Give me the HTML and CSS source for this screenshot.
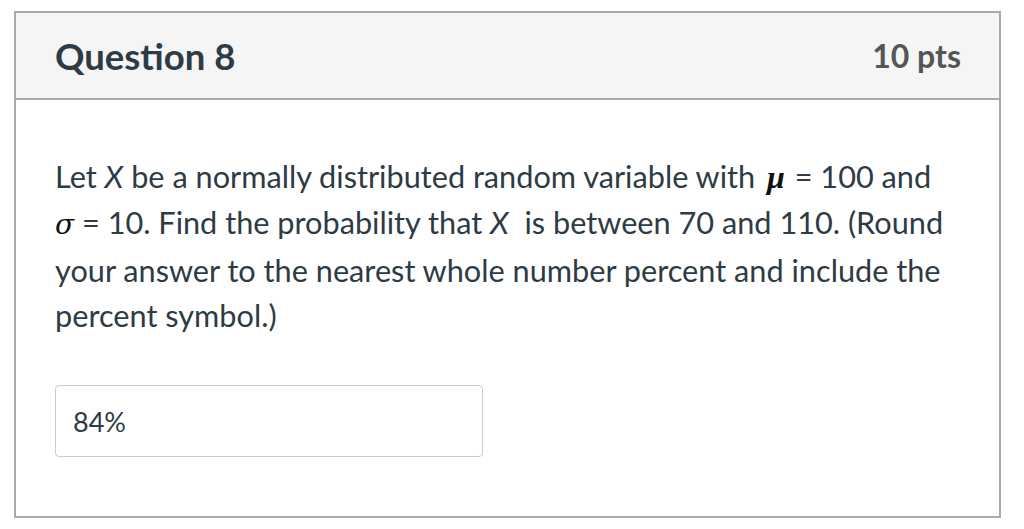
FILE: index.html
```html
<!DOCTYPE html>
<html>
<head>
<meta charset="utf-8">
<link rel="stylesheet" href="styles.css">
</head>
<body>
<div class="card">
  <div class="header">
    <h2 class="title">Question 8</h2>
    <span class="pts">10 pts</span>
  </div>
  <div class="content">
    <p class="question">Let <i class="var">X</i> be a normally distributed random variable with <i class="math mu">μ</i> = 100 and <span class="nowrap"><i class="math">σ</i> = 10.</span> Find the probability that <i class="var">X</i>&nbsp; is between 70 and 110. (Round your answer to the nearest whole number percent and include the percent symbol.)</p>
    <div class="answer">84%</div>
  </div>
</div>
</body>
</html>
```
FILE: styles.css
```css
html, body {
  margin: 0;
  padding: 0;
  background: #fff;
}
body {
  padding: 11px 23px 0 14px;
  font-family: Lato, "Liberation Sans", sans-serif;
  color: #2d3b45;
}
.card {
  border: 2px solid #aaaaaa;
  height: 507px;
  box-sizing: border-box;
  display: flex;
  flex-direction: column;
}
.header {
  background: #f5f5f5;
  border-bottom: 2px solid #aaaaaa;
  height: 87px;
  box-sizing: border-box;
  display: flex;
  align-items: center;
  justify-content: space-between;
  padding: 0 38px 0 39px;
}
.title {
  margin: 0;
  font-size: 36.5px;
  font-weight: 700;
  color: #2d3b45;
}
.pts {
  font-size: 32px;
  font-weight: 700;
  color: #555555;
}
.content {
  padding: 54px 39px 0 39px;
}
.question {
  margin: 0;
  font-size: 30.7px;
  line-height: 45.3px;
}
.nowrap {
  white-space: nowrap;
}
.var {
  font-style: italic;
}
.math {
  font-family: "DejaVu Serif", "Liberation Serif", serif;
  font-style: italic;
  font-size: 28px;
  color: #111;
}
.mu {
  font-family: "Liberation Serif", serif;
  font-size: 32px;
  font-weight: 700;
  margin: 0 2px 0 4px;
}
.answer {
  margin-top: 47px;
  width: 428px;
  height: 72px;
  box-sizing: border-box;
  border: 1px solid #c7cdd1;
  border-radius: 4px;
  display: flex;
  align-items: center;
  padding-left: 17px;
  font-size: 27px;
}
```
